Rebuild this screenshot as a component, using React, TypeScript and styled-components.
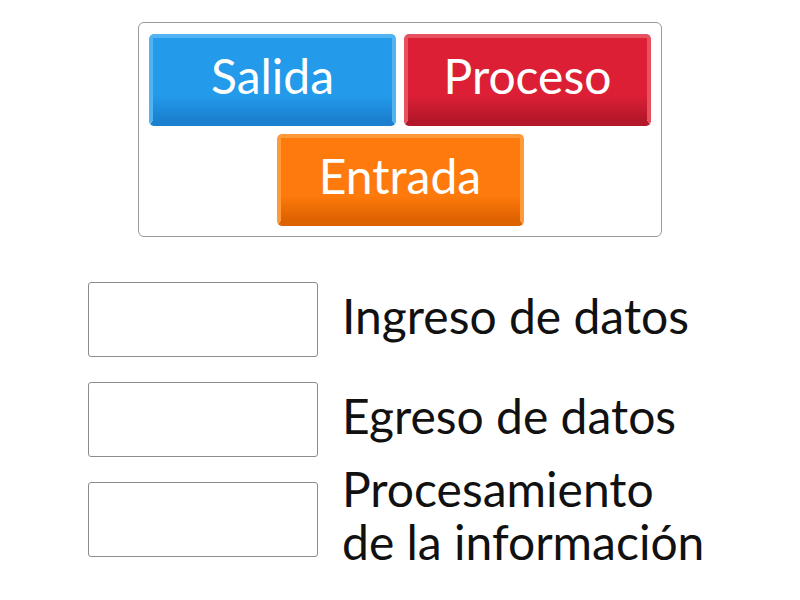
import React from 'react'
import styled, { createGlobalStyle } from 'styled-components'

const GlobalStyle = createGlobalStyle`
  body {
    margin: 0;
    background: #ffffff;
    font-family: Lato, "Open Sans", sans-serif;
  }
`

const Page = styled.div`
  width: 800px;
  height: 600px;
  display: flex;
  flex-direction: column;
  align-items: center;
  padding-top: 22px;
  box-sizing: border-box;
`

const Bank = styled.div`
  width: 524px;
  box-sizing: border-box;
  border: 1px solid #9a9a9a;
  border-radius: 6px;
  padding: 11px 10px 10px;
  display: flex;
  flex-wrap: wrap;
  justify-content: center;
  gap: 8px;
`

const palette = {
  blue: { top: '#52b3f2', main: '#239aea', bottom: '#1a80cf' },
  red: { top: '#e6505f', main: '#dc1f35', bottom: '#b4172a' },
  orange: { top: '#ff9a3a', main: '#ff7a0c', bottom: '#dd6200' },
}

type Tone = keyof typeof palette

const Tile = styled.div<{ $tone: Tone }>`
  width: 247px;
  height: 92px;
  box-sizing: border-box;
  border-radius: 5px;
  background: linear-gradient(
    ${p => palette[p.$tone].main} 70%,
    ${p => palette[p.$tone].bottom} 100%
  );
  border-style: solid;
  border-width: 4px 4px 6px 4px;
  border-color: ${p => palette[p.$tone].top} ${p => palette[p.$tone].top}
    ${p => palette[p.$tone].bottom} ${p => palette[p.$tone].top};
  color: #ffffff;
  font-size: 48px;
  display: flex;
  align-items: center;
  justify-content: center;
  padding-bottom: 8px;
`

const Rows = styled.div`
  align-self: stretch;
  display: flex;
  flex-direction: column;
  gap: 25px;
  padding-left: 88px;
  margin-top: 45px;
`

const Row = styled.div`
  height: 75px;
  display: flex;
  align-items: center;
  gap: 24px;
`

const Slot = styled.div`
  width: 230px;
  height: 75px;
  flex-shrink: 0;
  box-sizing: border-box;
  border: 1px solid #8c8c8c;
  border-radius: 3px;
`

const Label = styled.div`
  font-size: 48px;
  line-height: 53px;
  color: #111111;
  padding-bottom: 9px;
`

const tiles: { id: number; text: string; tone: Tone }[] = [
  { id: 1, text: 'Salida', tone: 'blue' },
  { id: 2, text: 'Proceso', tone: 'red' },
  { id: 3, text: 'Entrada', tone: 'orange' },
]

const targets = [
  { id: 1, lines: ['Ingreso de datos'] },
  { id: 2, lines: ['Egreso de datos'] },
  { id: 3, lines: ['Procesamiento', 'de la información'] },
]

const App = () => {
  return (
    <Page>
      <GlobalStyle />
      <Bank>
        {tiles.map(t => (
          <Tile key={t.id} $tone={t.tone}>{t.text}</Tile>
        ))}
      </Bank>
      <Rows>
        {targets.map(t => (
          <Row key={t.id}>
            <Slot />
            <Label>
              {t.lines.map(l => (
                <div key={l}>{l}</div>
              ))}
            </Label>
          </Row>
        ))}
      </Rows>
    </Page>
  )
}

export default App
